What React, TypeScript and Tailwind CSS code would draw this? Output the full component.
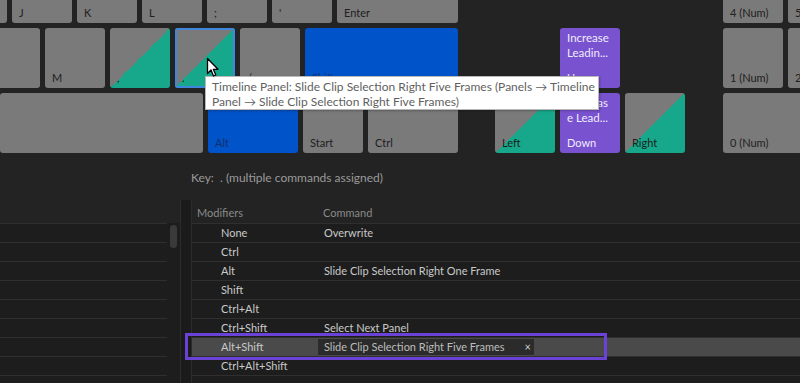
import type { ReactNode } from "react";

type Kind = "gray" | "blue" | "purple" | "teal";

const kindBg: Record<Kind, string> = {
  gray: "bg-[#7a7a7a] text-[#202020]",
  blue: "bg-[#0053c8] text-[#10306e]",
  purple: "bg-[#7852cf] text-[#f1ecff]",
  teal: "bg-[linear-gradient(to_top_left,#17a88b_50%,#7a7a7a_50%)] text-[#1c1c1c]",
};

function Key({
  cls = "w-[60px] ml-[5px]",
  kind = "gray",
  label,
  top,
  selected,
}: {
  cls?: string;
  kind?: Kind;
  label?: string;
  top?: ReactNode;
  selected?: boolean;
}) {
  return (
    <div
      className={`relative h-[60px] shrink-0 rounded-[3px] ${cls} ${kindBg[kind]} ${
        selected ? "ring-2 ring-inset ring-[#3f86dc]" : ""
      }`}
    >
      {top && <div className="px-[7px] pt-[2px] text-[11.5px] leading-[15px]">{top}</div>}
      {label && (
        <div className="absolute left-[7px] bottom-[4px] text-[11px] leading-[13px] whitespace-nowrap">
          {label}
        </div>
      )}
    </div>
  );
}

const rows: [string, string, boolean?][] = [
  ["None", "Overwrite"],
  ["Ctrl", ""],
  ["Alt", "Slide Clip Selection Right One Frame"],
  ["Shift", ""],
  ["Ctrl+Alt", ""],
  ["Ctrl+Shift", "Select Next Panel"],
  ["Alt+Shift", "Slide Clip Selection Right Five Frames", true],
  ["Ctrl+Alt+Shift", ""],
  ["", ""],
];

export default function App() {
  return (
    <div className="relative w-[800px] h-[383px] overflow-hidden bg-[#1d1d1d] font-['Lato',sans-serif]">
      {/* keyboard */}
      <div className="h-[153px] overflow-hidden bg-[#232323]">
        <div className="-mt-[37px] flex flex-col gap-[5px]">
          <div className="flex">
            <Key cls="w-[60px] -ml-[53px]" label="H" />
            <Key label="J" />
            <Key label="K" />
            <Key label="L" />
            <Key label=";" />
            <Key label="'" />
            <Key cls="w-[121px] ml-[5px]" label="Enter" />
            <Key cls="w-[60px] ml-[265px]" label="4 (Num)" />
            <Key label="5 (Num)" />
          </div>
          <div className="flex">
            <Key cls="w-[60px] -ml-[20px]" />
            <Key label="M" />
            <Key kind="teal" label="," />
            <Key kind="teal" label="." selected />
            <Key label="/" />
            <Key cls="w-[153px] ml-[5px]" kind="blue" label="Shift" />
            <Key
              cls="w-[60px] ml-[102px]"
              kind="purple"
              label="Up"
              top={
                <>
                  Increase
                  <br />
                  Leadin...
                </>
              }
            />
            <Key cls="w-[60px] ml-[103px]" label="1 (Num)" />
            <Key label="2 (Num)" />
          </div>
          <div className="flex">
            <Key cls="w-[203px]" />
            <Key cls="w-[90px] ml-[5px]" kind="blue" label="Alt" />
            <Key label="Start" />
            <Key cls="w-[90px] ml-[5px]" label="Ctrl" />
            <Key cls="w-[60px] ml-[37px]" kind="teal" label="Left" />
            <Key
              kind="purple"
              label="Down"
              top={
                <>
                  Decreas
                  <br />
                  e Lead...
                </>
              }
            />
            <Key kind="teal" label="Right" />
            <Key cls="w-[120px] ml-[38px]" label="0 (Num)" />
          </div>
        </div>
      </div>

      {/* key info */}
      <div className="h-[47px] bg-[#232323] pl-[191px] pt-[18px] text-[12px] leading-[14px] text-[#9a9a9a]">
        Key:&nbsp; . (multiple commands assigned)
      </div>

      {/* lists */}
      <div className="flex h-[183px] overflow-hidden">
        <div className="flex w-[180px] shrink-0 flex-col">
          <div className="h-[23px] shrink-0 bg-[#232323]" />
          <div className="relative flex-1">
            <div className="w-[167px]">
              {rows.map((_, i) => (
                <div key={i} className="h-[19px] border-t border-[#2f2f2f]" />
              ))}
            </div>
            <div className="absolute left-[170px] top-[2px] h-[23px] w-[7px] rounded-full bg-[#3a3a3a]" />
          </div>
        </div>
        <div className="w-[11px] shrink-0 border-l border-[#2c2c2c] bg-[#1b1b1b]" />
        <div className="flex flex-1 flex-col border-l border-[#2c2c2c]">
          <div className="flex h-[23px] shrink-0 items-center bg-[#232323] pt-[3px] text-[11px] text-[#8a8a8a]">
            <span className="w-[126px] pl-[5px]">Modifiers</span>
            <span className="pl-[5px]">Command</span>
          </div>
          {rows.map(([mod, cmd, hi], i) => (
            <div
              key={i}
              className={`flex h-[19px] shrink-0 items-center border-t border-[#2f2f2f] text-[11px] text-[#c9c9c9] ${
                hi ? "bg-[#4a4a4a]" : ""
              }`}
            >
              <span className="w-[126px] pl-[29px]">{mod}</span>
              {hi ? (
                <span className="flex h-[16px] w-[216px] items-center justify-between bg-[#2b2b2b] pl-[6px] pr-[3px] text-[#bdbdbd]">
                  {cmd}
                  <span className="text-[11px] text-[#d0d0d0]">×</span>
                </span>
              ) : (
                <span className="pl-[6px]">{cmd}</span>
              )}
            </div>
          ))}
        </div>
      </div>

      {/* highlight annotation */}
      <div className="absolute left-[185px] top-[333px] h-[27px] w-[422px] border-[3px] border-[#6b42d6]" />

      {/* tooltip */}
      <div className="absolute left-[205px] top-[76px] h-[34px] w-[394px] border border-[#b8b8b8] bg-white pl-[6px] pt-[2px] text-[12px] leading-[15px] text-[#5f5f5f] whitespace-nowrap shadow-[1px_1px_2px_rgba(0,0,0,0.25)]">
        Timeline Panel: Slide Clip Selection Right Five Frames (Panels → Timeline
        <br />
        Panel → Slide Clip Selection Right Five Frames)
      </div>

      {/* cursor */}
      <svg className="absolute left-[206px] top-[57px]" width="14" height="21" viewBox="0 0 14 21">
        <path
          d="M1.5 1.5 L1.5 16.5 L5 13 L7.5 19 L9.8 18 L7.3 12.3 L12 12.3 Z"
          fill="#fff"
          stroke="#000"
          strokeWidth="1.3"
          strokeLinejoin="round"
        />
      </svg>
    </div>
  );
}
